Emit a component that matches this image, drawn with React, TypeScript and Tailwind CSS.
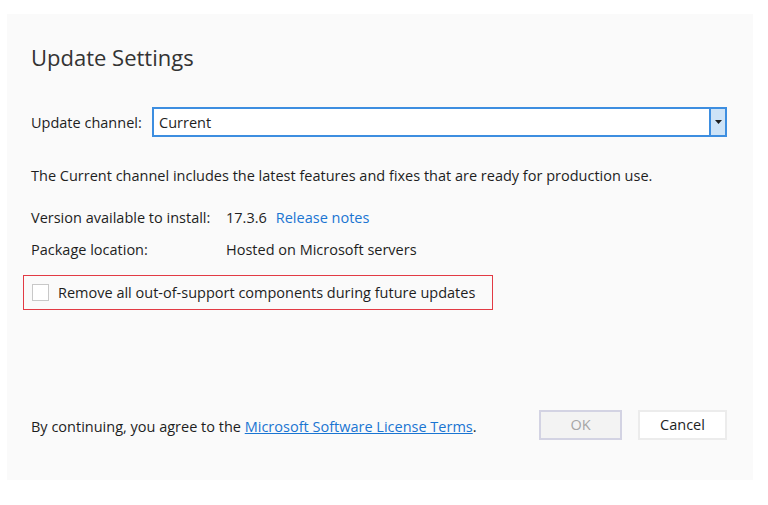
import { useState } from 'react';

export default function App() {
  const [removeOld, setRemoveOld] = useState(false);

  return (
    <div
      className="w-[768px] h-[505px] bg-white pt-[14px] pl-[7px]"
      style={{ fontFamily: '"Segoe UI", "Open Sans", "Noto Sans", sans-serif' }}
    >
      <div className="w-[746px] h-[466px] bg-[#fafafa] flex flex-col pl-[24px] pr-[26px] text-[14.5px] text-[#1e1e1e]">
        {/* Title */}
        <h1 className="text-[22px] text-[#333] leading-[30px] mt-[28px]">Update Settings</h1>

        {/* Channel */}
        <div className="flex items-center mt-[35px]">
          <span className="w-[121px] pt-[2px]">Update channel:</span>
          <div className="flex-1 h-[30px] flex border-2 border-[#3d8ee0] bg-white">
            <span className="flex-1 pl-[5px] pt-[2px] leading-[24px]">Current</span>
            <div className="w-[16px] border-l-2 border-[#3d8ee0] bg-[#cde3f7] flex items-center justify-center">
              <svg width="7" height="4" viewBox="0 0 7 4">
                <path d="M0 0h7L3.5 4z" fill="#1e1e1e" />
              </svg>
            </div>
          </div>
        </div>

        <p className="mt-[29px] leading-[20px]">
          The Current channel includes the latest features and fixes that are ready for production use.
        </p>

        <div className="flex mt-[22px] leading-[20px]">
          <span className="w-[195px]">Version available to install:</span>
          <span>17.3.6</span>
          <a className="ml-[9px] text-[#1a75d2]">Release notes</a>
        </div>
        <div className="flex mt-[12px] leading-[20px]">
          <span className="w-[195px]">Package location:</span>
          <span>Hosted on Microsoft servers</span>
        </div>

        {/* Highlighted checkbox */}
        <div className="self-start -ml-[8px] mt-[15px] h-[35px] w-[470px] border border-[#e23a44] flex items-center pl-[8px]">
          <button
            onClick={() => setRemoveOld(!removeOld)}
            className="w-[17px] h-[17px] border border-[#c8c8c8] bg-white flex items-center justify-center"
          >
            {removeOld && (
              <svg width="11" height="9" viewBox="0 0 11 9">
                <path d="M1 4.5l3 3 6-6.5" stroke="#1e1e1e" strokeWidth="1.4" fill="none" />
              </svg>
            )}
          </button>
          <span className="ml-[9px] pt-[1px]">Remove all out-of-support components during future updates</span>
        </div>

        {/* Footer */}
        <div className="mt-auto mb-[40px] flex items-center">
          <span className="flex-1 pt-[4px]">
            By continuing, you agree to the{' '}
            <a className="text-[#1a75d2] underline">Microsoft Software License Terms</a>.
          </span>
          <button
            disabled
            className="w-[83px] h-[30px] bg-[#f3f3f3] border-2 border-[#d3d3e3] text-[#a6a6a6]"
          >
            OK
          </button>
          <button className="ml-[16px] w-[89px] h-[30px] bg-white border-2 border-[#ececec] text-[#1e1e1e]">
            Cancel
          </button>
        </div>
      </div>
    </div>
  );
}
